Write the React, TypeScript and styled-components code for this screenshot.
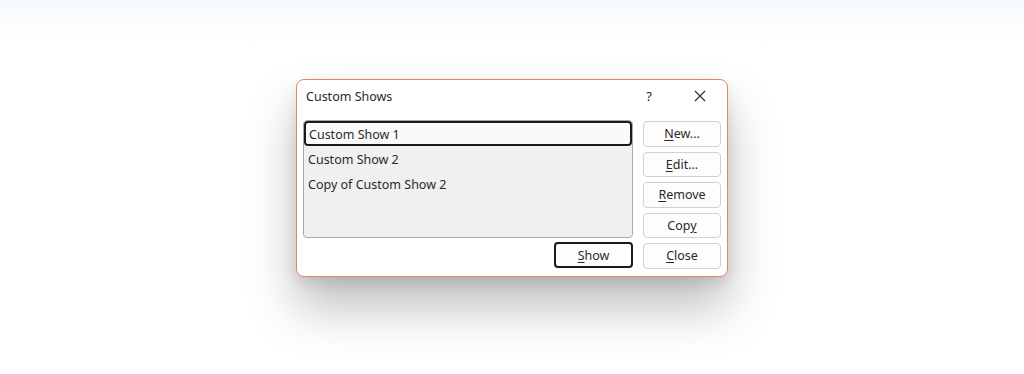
import styled, { createGlobalStyle } from "styled-components"

const GlobalStyle = createGlobalStyle`
    body {
        margin: 0;
        font-family: "Noto Sans", "Open Sans", Arial, sans-serif;
    }
`

const Page = styled.div`
    height: 374px;
    background: linear-gradient(#f5f8fb 0, #fcfdfe 25px, #ffffff 45px);
    display: flex;
    justify-content: center;
    padding-top: 79px;
    box-sizing: border-box;
`

const Dialog = styled.div`
    width: 432px;
    height: 198px;
    box-sizing: border-box;
    background: #ffffff;
    border: 1px solid #e1846c;
    border-radius: 8px;
    box-shadow: 0 30px 50px rgba(0, 0, 0, 0.26), 0 6px 14px rgba(0, 0, 0, 0.1);
    display: flex;
    flex-direction: column;
`

const TitleBar = styled.div`
    height: 32px;
    display: flex;
    align-items: center;
    padding-left: 9px;
    padding-right: 9px;
    box-sizing: border-box;
`

const Title = styled.div`
    flex: 1;
    font-size: 12.5px;
    color: #2a2a2a;
`

const TitleButton = styled.div<{ $w: number; $mr?: number }>`
    width: ${p => p.$w}px;
    margin-right: ${p => p.$mr ?? 0}px;
    display: flex;
    justify-content: center;
    align-items: center;
    font-size: 13px;
    color: #2a2a2a;
`

const Body = styled.div`
    flex: 1;
    display: grid;
    grid-template-columns: 330px 78px;
    column-gap: 10px;
    padding: 8px 6px 0 6px;
`

const LeftColumn = styled.div`
    display: flex;
    flex-direction: column;
    align-items: flex-end;
`

const ListBox = styled.div`
    width: 100%;
    height: 118px;
    box-sizing: border-box;
    background: #f0f0f0;
    border: 1px solid #a8a8a8;
    border-radius: 4px;
`

const Item = styled.div<{ $selected?: boolean }>`
    height: 25px;
    box-sizing: border-box;
    display: flex;
    align-items: center;
    padding-left: ${p => (p.$selected ? "3px" : "4px")};
    padding-top: 1px;
    font-size: 12.5px;
    color: #2a2a2a;
    background: ${p => (p.$selected ? "#fafafa" : "transparent")};
    border: ${p => (p.$selected ? "2px solid #1a1a1a" : "none")};
    border-radius: 4px;
`

const ButtonColumn = styled.div`
    display: flex;
    flex-direction: column;
    gap: 5px;
    padding-top: 1px;
`

const Button = styled.div<{ $default?: boolean }>`
    height: ${p => (p.$default ? "26px" : "25.5px")};
    width: ${p => (p.$default ? "79px" : "78px")};
    box-sizing: border-box;
    display: flex;
    justify-content: center;
    align-items: center;
    background: #fdfdfd;
    border: ${p => (p.$default ? "2px solid #1a1a1a" : "1px solid #d0d0d0")};
    border-radius: 4px;
    font-size: 12.5px;
    color: #2a2a2a;
    margin-top: ${p => (p.$default ? "4px" : "0")};
    u {
        text-decoration-thickness: 1px;
        text-underline-offset: 2px;
    }
`

function CloseIcon() {
    return (
        <svg width="12" height="12" viewBox="0 0 12 12">
            <path d="M1 1 L11 11 M11 1 L1 11" stroke="#2a2a2a" strokeWidth="1.1" fill="none" />
        </svg>
    )
}

export default function App() {
    const items = ["Custom Show 1", "Custom Show 2", "Copy of Custom Show 2"]
    return (
        <>
            <GlobalStyle />
            <Page>
                <Dialog>
                    <TitleBar>
                        <Title>Custom Shows</Title>
                        <TitleButton $w={30} $mr={18}>?</TitleButton>
                        <TitleButton $w={36}><CloseIcon /></TitleButton>
                    </TitleBar>
                    <Body>
                        <LeftColumn>
                            <ListBox>
                                {items.map((name, i) => (
                                    <Item key={name} $selected={i === 0}>{name}</Item>
                                ))}
                            </ListBox>
                            <Button $default><span><u>S</u>how</span></Button>
                        </LeftColumn>
                        <ButtonColumn>
                            <Button><span><u>N</u>ew...</span></Button>
                            <Button><span><u>E</u>dit...</span></Button>
                            <Button><span><u>R</u>emove</span></Button>
                            <Button><span>Cop<u>y</u></span></Button>
                            <Button><span><u>C</u>lose</span></Button>
                        </ButtonColumn>
                    </Body>
                </Dialog>
            </Page>
        </>
    )
}
